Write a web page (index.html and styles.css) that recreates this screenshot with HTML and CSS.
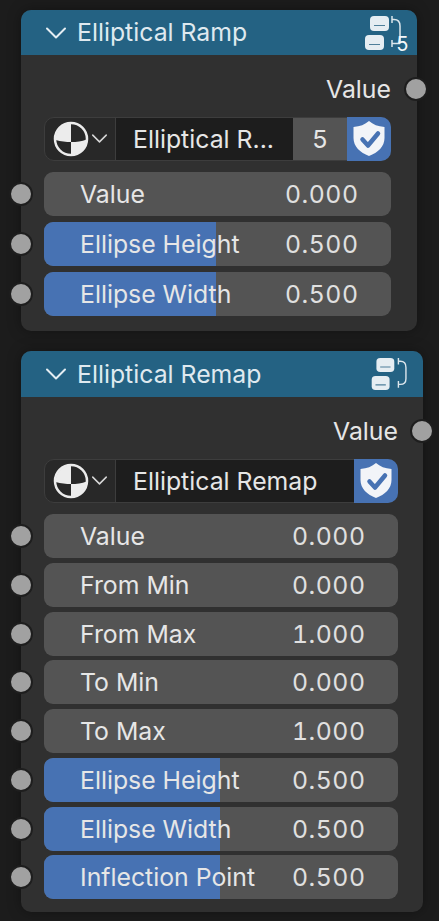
FILE: index.html
```html
<!DOCTYPE html>
<html lang="en">
<head>
<meta charset="utf-8">
<title>Elliptical nodes</title>
<link rel="stylesheet" href="styles.css">
</head>
<body>
<svg class="defs" width="0" height="0" aria-hidden="true">
  <defs>
    <symbol id="chev" viewBox="0 0 20 12"><path d="M1 1.500 10 10.500 19 1.500" fill="none" stroke="currentColor" stroke-width="2" stroke-linecap="round" stroke-linejoin="round"/></symbol>
    <symbol id="sphere" viewBox="0 0 36 36">
      <circle cx="18" cy="18" r="16" fill="#282828" stroke="#ececec" stroke-width="2.500"/>
      <path d="M18 2.500A15.500 15.500 0 0 0 2.600 19C8 20.500 13 21 18 21Z" fill="#ececec"/>
      <path d="M18 21C23.500 21 29 20.400 33.500 18.500A15.500 15.500 0 0 1 18 33.500Z" fill="#ececec"/>
    </symbol>
    <symbol id="shield" viewBox="0 0 32 35">
      <path d="M16 0C20 3.500 25 5.500 31.500 6V17C31.500 25.500 25 31.500 16 35 7 31.500 .5 25.500 .5 17V6C7 5.500 12 3.500 16 0Z" fill="#f2f4f8"/>
      <path d="M9.500 18.500 15 24.500 25 12.500" fill="none" stroke="#4772b3" stroke-width="4.500" stroke-linecap="round" stroke-linejoin="round"/>
    </symbol>
    <symbol id="pills" viewBox="0 0 24 34">
      <rect x="5" y="0" width="19" height="15" rx="4" fill="#e6edf2"/>
      <rect x="0" y="19" width="19" height="15" rx="4" fill="#e6edf2"/>
      <path d="M9 9.500H20M4 28.500H15" stroke="#4f7f9a" stroke-width="1.200"/>
    </symbol>
  </defs>
</svg>

<main class="stack">
  <section class="node node-ramp">
    <header class="head">
      <svg class="chev"><use href="#chev"/></svg>
      <span class="title">Elliptical Ramp</span>
      <span class="group-icon">
        <svg class="pills"><use href="#pills"/></svg>
        <svg class="link" viewBox="0 0 16 34"><path d="M1 0V7M1 3.500H3C7 3.500 9 6 9 10V27.500M1 24V31M1 27.500H9" fill="none" stroke="#dce6ec" stroke-width="1.500"/></svg>
        <span class="users">5</span>
      </span>
    </header>
    <div class="body">
      <div class="output"><span>Value</span><i class="socket socket-out"></i></div>
      <div class="picker">
        <span class="browse"><svg class="sphere"><use href="#sphere"/></svg><svg class="mini-chev"><use href="#chev"/></svg></span>
        <span class="name">Elliptical R...</span>
        <span class="count">5</span>
        <span class="fake"><svg class="shield"><use href="#shield"/></svg></span>
      </div>
      <div class="fields">
        <div class="field"><i class="socket"></i><span class="label">Value</span><span class="val">0.000</span></div>
        <div class="field"><i class="socket"></i><b class="fill" style="width:49.6%"></b><span class="label">Ellipse Height</span><span class="val">0.500</span></div>
        <div class="field"><i class="socket"></i><b class="fill" style="width:49.6%"></b><span class="label">Ellipse Width</span><span class="val">0.500</span></div>
      </div>
    </div>
  </section>

  <section class="node node-remap">
    <header class="head">
      <svg class="chev"><use href="#chev"/></svg>
      <span class="title">Elliptical Remap</span>
      <span class="group-icon">
        <svg class="pills"><use href="#pills"/></svg>
        <svg class="link" viewBox="0 0 16 34"><path d="M1 0V7M1 3.500H3C7 3.500 9 6 9 10V22C9 26 7 28 3 28H1M1 24.500V31.500" fill="none" stroke="#dce6ec" stroke-width="1.500"/></svg>
      </span>
    </header>
    <div class="body">
      <div class="output"><span>Value</span><i class="socket socket-out"></i></div>
      <div class="picker">
        <span class="browse"><svg class="sphere"><use href="#sphere"/></svg><svg class="mini-chev"><use href="#chev"/></svg></span>
        <span class="name">Elliptical Remap</span>
        <span class="fake"><svg class="shield"><use href="#shield"/></svg></span>
      </div>
      <div class="fields">
        <div class="field"><i class="socket"></i><span class="label">Value</span><span class="val">0.000</span></div>
        <div class="field"><i class="socket"></i><span class="label">From Min</span><span class="val">0.000</span></div>
        <div class="field"><i class="socket"></i><span class="label">From Max</span><span class="val">1.000</span></div>
        <div class="field"><i class="socket"></i><span class="label">To Min</span><span class="val">0.000</span></div>
        <div class="field"><i class="socket"></i><span class="label">To Max</span><span class="val">1.000</span></div>
        <div class="field"><i class="socket"></i><b class="fill" style="width:49.7%"></b><span class="label">Ellipse Height</span><span class="val">0.500</span></div>
        <div class="field"><i class="socket"></i><b class="fill" style="width:49.7%"></b><span class="label">Ellipse Width</span><span class="val">0.500</span></div>
        <div class="field"><i class="socket"></i><b class="fill" style="width:49.7%"></b><span class="label">Inflection Point</span><span class="val">0.500</span></div>
      </div>
    </div>
  </section>
</main>
</body>
</html>
```
FILE: styles.css
```css
* { box-sizing: border-box; }
html, body { margin: 0; height: 100%; }
body {
  background: #1c1c1c;
  color: #e6e6e6;
  font-family: Inter, "Liberation Sans", sans-serif;
  font-size: 24.8px;
  overflow: hidden;
}
.defs { position: absolute; }
.stack {
  display: flex;
  flex-direction: column;
  gap: 20px;
  padding: 10px 0 0 21px;
}
.node {
  background: #303030;
  border-radius: 10px;
  box-shadow: 0 0 14px rgba(0, 0, 0, .35);
}
.node-ramp { width: 395.500px; height: 321px; }
.node-remap { width: 401.500px; height: 561px; }
.head {
  height: 45px;
  display: flex;
  align-items: center;
  background: #246283;
  color: #dfe9ef;
  border-radius: 10px 10px 0 0;
  padding-left: 25px;
  position: relative;
}
.node-remap .head { height: 46px; }
.chev { width: 20px; height: 12px; margin-right: 11px; color: #e4edf2; flex: none; }
.title { line-height: 1; }
.group-icon { position: absolute; top: 6px; left: 344px; width: 50px; height: 34px; }
.node-remap .group-icon { top: 7px; left: 350px; height: 32px; }
.pills { position: absolute; left: 0; top: 0; width: 24px; height: 100%; }
.link { position: absolute; left: 26px; top: 0; width: 16px; height: 100%; }
.users {
  position: absolute;
  left: 31px;
  top: 18px;
  font-size: 20px;
  line-height: 1;
  color: #f4f7f9;
  font-variant-numeric: tabular-nums;
}
.body { padding: 12px 25.500px 0 23px; }
.node-remap .body { padding-right: 24.500px; }
.output {
  height: 44px;
  display: flex;
  align-items: center;
  justify-content: flex-end;
  position: relative;
}
.picker {
  margin-top: 5.500px;
  height: 44.500px;
  display: flex;
  align-items: stretch;
  background: #282828;
  border: 1px solid #3d3d3d;
  border-radius: 10px;
}
.browse {
  width: 71px;
  flex: none;
  display: flex;
  align-items: center;
  padding-left: 8px;
  gap: 3px;
  border-right: 1px solid #3d3d3d;
}
.sphere { width: 36px; height: 36px; flex: none; }
.mini-chev { width: 15px; height: 9px; color: #d8d8d8; flex: none; }
.name {
  flex: 1;
  background: #1d1d1d;
  display: flex;
  align-items: center;
  padding-left: 17px;
  white-space: nowrap;
}
.count {
  width: 54px;
  flex: none;
  background: #545454;
  display: flex;
  align-items: center;
  justify-content: center;
  font-variant-numeric: tabular-nums;
}
.fake {
  width: 44px;
  flex: none;
  margin: -1px -1px -1px 0;
  background: #4772b3;
  border-radius: 0 10px 10px 0;
  display: flex;
  align-items: center;
  justify-content: center;
}
.shield { width: 32px; height: 35px; }
.fields {
  margin-top: 11px;
  display: flex;
  flex-direction: column;
  gap: 6px;
}
.node-remap .fields { gap: 4.750px; }
.field {
  position: relative;
  height: 44px;
  background: #545454;
  border-radius: 9px;
  display: flex;
  align-items: center;
  justify-content: space-between;
  padding: 0 32.500px 0 36px;
}
.fill {
  position: absolute;
  left: 0;
  top: 0;
  bottom: 0;
  background: #4772b3;
  border-radius: 9px 0 0 9px;
}
.label, .val { position: relative; }
.val { color: #e0e0e0; font-variant-numeric: tabular-nums; letter-spacing: .5px; }
.socket {
  position: absolute;
  left: -35px;
  top: 50%;
  width: 24px;
  height: 24px;
  margin-top: -12px;
  border-radius: 50%;
  background: #a1a1a1;
  border: 2px solid #1e1e1e;
}
.socket-out { left: auto; right: -37px; }
.node-remap .socket-out { right: -36px; }
```
